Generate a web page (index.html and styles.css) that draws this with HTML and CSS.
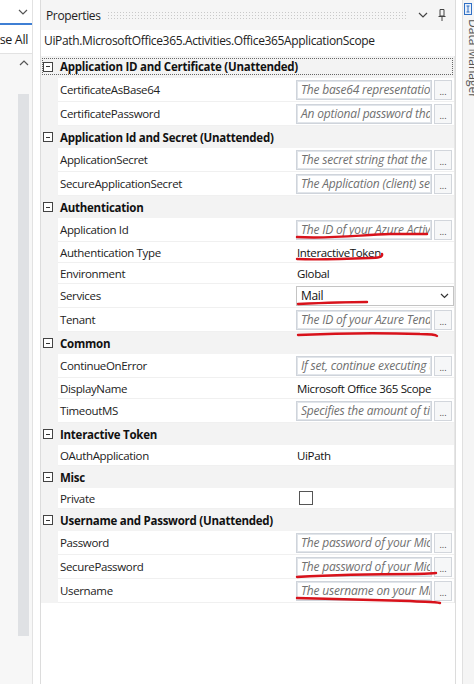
FILE: index.html
```html
<!DOCTYPE html>
<html lang="en">
<head>
    <meta charset="UTF-8">
    <meta name="viewport" content="width=device-width, initial-scale=1.0">
    <title>Properties</title>
    <link rel="stylesheet" href="styles.css">
</head>
<body>

    <!-- left tree panel, mostly scrolled off -->
    <div class="side">
        <div class="side-top">
            <svg class="chev" width="10" height="6" viewBox="0 0 10 6"><path d="M1 1 L5 5 L9 1" fill="none" stroke="#555" stroke-width="1.2"/></svg>
        </div>
        <div class="side-collapse">Collapse All</div>
        <div class="side-scroll">
            <svg class="chev-up" width="10" height="6" viewBox="0 0 10 6"><path d="M1 5 L5 1 L9 5" fill="none" stroke="#555" stroke-width="1.2"/></svg>
            <div class="thumb"></div>
        </div>
    </div>
    <div class="gutter"></div>

    <div class="props">
        <div class="props-head">
            <span class="props-title">Properties</span>
            <span class="grip"></span>
            <svg class="head-chev" width="10" height="6" viewBox="0 0 10 6"><path d="M1 1 L5 5 L9 1" fill="none" stroke="#444" stroke-width="1.2"/></svg>
            <svg class="pin" width="8" height="12" viewBox="0 0 8 12"><path d="M2 0.5 H6 V7 H2 Z M0.5 7.5 H7.5 M4 8 V12" fill="none" stroke="#444" stroke-width="1"/></svg>
        </div>
        <div class="props-type">UiPath.MicrosoftOffice365.Activities.Office365ApplicationScope</div>

        <div class="grid">
            <div class="cat focused"><span class="exp"></span>Application ID and Certificate (Unattended)</div>
            <div class="row tall">
                <div class="name">CertificateAsBase64</div>
                <div class="value"><span class="box"><span>The base64 representation of the certificate</span></span><span class="dots">...</span></div>
            </div>
            <div class="row tall">
                <div class="name">CertificatePassword</div>
                <div class="value"><span class="box"><span>An optional password that protects the certificate</span></span><span class="dots">...</span></div>
            </div>

            <div class="cat"><span class="exp"></span>Application Id and Secret (Unattended)</div>
            <div class="row tall">
                <div class="name">ApplicationSecret</div>
                <div class="value"><span class="box"><span>The secret string that the application uses</span></span><span class="dots">...</span></div>
            </div>
            <div class="row tall">
                <div class="name">SecureApplicationSecret</div>
                <div class="value"><span class="box"><span>The Application (client) secret</span></span><span class="dots">...</span></div>
            </div>

            <div class="cat"><span class="exp"></span>Authentication</div>
            <div class="row tall">
                <div class="name">Application Id</div>
                <div class="value"><span class="box"><span>The ID of your Azure Active Directory application</span></span><span class="dots">...</span></div>
            </div>
            <div class="row">
                <div class="name">Authentication Type</div>
                <div class="value plain">InteractiveToken</div>
            </div>
            <div class="row">
                <div class="name">Environment</div>
                <div class="value plain">Global</div>
            </div>
            <div class="row tall">
                <div class="name">Services</div>
                <div class="value"><span class="select">Mail<svg width="9" height="6" viewBox="0 0 9 6"><path d="M1 1 L4.5 4.5 L8 1" fill="none" stroke="#333" stroke-width="1.2"/></svg></span></div>
            </div>
            <div class="row tall">
                <div class="name">Tenant</div>
                <div class="value"><span class="box"><span>The ID of your Azure Tenant</span></span><span class="dots">...</span></div>
            </div>

            <div class="cat"><span class="exp"></span>Common</div>
            <div class="row tall">
                <div class="name">ContinueOnError</div>
                <div class="value"><span class="box"><span>If set, continue executing the remaining activities</span></span><span class="dots">...</span></div>
            </div>
            <div class="row">
                <div class="name">DisplayName</div>
                <div class="value plain">Microsoft Office 365 Scope</div>
            </div>
            <div class="row tall">
                <div class="name">TimeoutMS</div>
                <div class="value"><span class="box"><span>Specifies the amount of time to wait</span></span><span class="dots">...</span></div>
            </div>

            <div class="cat"><span class="exp"></span>Interactive Token</div>
            <div class="row">
                <div class="name">OAuthApplication</div>
                <div class="value plain">UiPath</div>
            </div>

            <div class="cat"><span class="exp"></span>Misc</div>
            <div class="row">
                <div class="name">Private</div>
                <div class="value plain"><span class="check"></span></div>
            </div>

            <div class="cat"><span class="exp"></span>Username and Password (Unattended)</div>
            <div class="row tall">
                <div class="name">Password</div>
                <div class="value"><span class="box"><span>The password of your Microsoft account</span></span><span class="dots">...</span></div>
            </div>
            <div class="row tall">
                <div class="name">SecurePassword</div>
                <div class="value"><span class="box"><span>The password of your Microsoft account</span></span><span class="dots">...</span></div>
            </div>
            <div class="row tall">
                <div class="name">Username</div>
                <div class="value"><span class="box"><span>The username on your Microsoft account</span></span><span class="dots">...</span></div>
            </div>
        </div>
    </div>

    <!-- collapsed Data Manager dock -->
    <div class="dock">
        <svg class="dock-icon" width="8" height="12" viewBox="0 0 8 12"><rect x="0.5" y="0.5" width="7" height="11" fill="#e8f0fb" stroke="#2f6fc4"/><path d="M2.5 3 H5.5 M4 3 V9 M2.5 9 H5.5" stroke="#2f6fc4" stroke-width="1"/></svg>
        <span class="dock-label">Data Manager</span>
    </div>

    <!-- red pen marks drawn over the screenshot -->
    <svg class="marks" width="474" height="684" viewBox="0 0 474 684">
        <g fill="none" stroke="#d8121b" stroke-width="2.4" stroke-linecap="round">
            <path d="M297 237 C330 239 360 235 390 234 C405 234 418 234 427 234"/>
            <path d="M297 259 C320 260 345 259 370 258 C378 258 383 257 382 254"/>
            <path d="M298 304 C320 303 345 302 367 302"/>
            <path d="M298 335 C340 333 390 333 420 334 C430 334 436 335 437 336"/>
            <path d="M297 577 C330 575 380 574 415 574 C428 574 434 573 436 573"/>
            <path d="M297 598 C330 599 370 600 410 601 C425 602 435 602 440 603"/>
        </g>
    </svg>

</body>
</html>
```

FILE: styles.css
```css
body {
    font-family: 'Open Sans', 'Noto Sans', sans-serif;
    font-size: 11.5px;
    letter-spacing: -0.35px;
    color: #1b1b1b;
    background-color: #fff;
    margin: 0;
    padding: 0;
    width: 474px;
    height: 684px;
    display: flex;
    overflow: hidden;
    position: relative;
}

/* left panel */
.side {
    width: 32px;
    background-color: #f7f7f7;
    border-right: 1px solid #e2e2e2;
    display: flex;
    flex-direction: column;
    overflow: hidden;
}

.side-top {
    height: 23px;
    background-color: #fff;
    border-bottom: 2px solid #3f7fd4;
    display: flex;
    align-items: center;
    justify-content: flex-end;
    padding-right: 4px;
}

.side-collapse {
    height: 28px;
    background-color: #fff;
    border-bottom: 1px solid #e2e2e2;
    white-space: nowrap;
    direction: rtl;
    text-align: left;
    line-height: 30px;
    font-size: 12.5px;
    padding-right: 4px;
    overflow: hidden;
}

.side-scroll {
    flex: 1;
    display: flex;
    flex-direction: column;
    align-items: flex-end;
    padding: 6px 3px 0 0;
}

.chev-up {
    margin-bottom: 28px;
}

.thumb {
    width: 11px;
    height: 542px;
    background-color: #dfe1e4;
}

.gutter {
    width: 7px;
    background-color: #fff;
}

/* properties panel */
.props {
    width: 414px;
    border-left: 1px solid #dcdcdc;
    border-right: 1px solid #dcdcdc;
    display: flex;
    flex-direction: column;
}

.props-head {
    height: 30px;
    background-color: #f5f5f5;
    display: flex;
    align-items: center;
    padding: 0 9px 0 5px;
}

.props-title {
    font-size: 12px;
    color: #222;
}

.grip {
    flex: 1;
    height: 8px;
    margin: 0 10px 0 6px;
    background-image: radial-gradient(#c9c9c9 0.7px, transparent 0.9px);
    background-size: 3px 3px;
}

.pin {
    margin-left: 10px;
}

.props-type {
    height: 26px;
    line-height: 22px;
    padding-left: 3px;
    font-size: 12px;
    color: #222;
    white-space: nowrap;
}

/* grey margin to the left of each row */
.grid {
    display: flex;
    flex-direction: column;
    border-right: 1px solid #e6e6e6;
    background-color: #f3f3f3;
}

.cat {
    height: 22px;
    background-color: #f3f3f3;
    display: flex;
    align-items: center;
    font-weight: bold;
    font-size: 11.5px;
    letter-spacing: -0.25px;
    color: #111;
}

.cat.focused {
    outline: 1px dotted #666;
    outline-offset: -2px;
    height: 19px;
    margin-top: 1px;
    margin-bottom: 2px;
}

.exp {
    width: 8px;
    height: 8px;
    border: 1px solid #444;
    margin: 0 7px 0 2px;
    position: relative;
    background-color: #fff;
}

.exp::after {
    content: "";
    position: absolute;
    left: 2px;
    top: 3.5px;
    width: 4px;
    height: 1px;
    background-color: #333;
}

.row {
    height: 21px;
    display: grid;
    grid-template-columns: 235px 1fr;
    margin-left: 17px;
    background-color: #fff;
    border-bottom: 1px solid #f0f0f0;
    box-sizing: border-box;
}

.row.tall {
    height: 24px;
}

.name {
    padding-left: 2px;
    display: flex;
    align-items: center;
    white-space: nowrap;
    color: #222;
}

.value {
    display: flex;
    align-items: center;
    padding-left: 3px;
    gap: 2px;
    overflow: hidden;
    white-space: nowrap;
}

.value.plain {
    padding-left: 4px;
    color: #111;
}

.box {
    width: 126px;
    height: 16px;
    border: 2px solid #e1e5ea;
    outline: 1px solid #cfd4db;
    outline-offset: -1px;
    padding: 0 3px;
    line-height: 16px;
    font-size: 12px;
    letter-spacing: -0.2px;
    font-style: italic;
    color: #707070;
    overflow: hidden;
    white-space: nowrap;
}

.dots {
    width: 16px;
    height: 18px;
    border: 1px solid #d2d6dc;
    background-color: #f6f7f8;
    font-size: 9px;
    letter-spacing: 0;
    color: #444;
    text-align: center;
    line-height: 22px;
    overflow: hidden;
}

.select {
    width: 149px;
    height: 18px;
    border: 1px solid #c4c4c4;
    display: flex;
    align-items: center;
    justify-content: space-between;
    padding: 0 4px;
    font-size: 12px;
    color: #111;
}

.check {
    width: 12px;
    height: 12px;
    border: 1px solid #555;
    margin-left: 2px;
}

/* right dock */
.dock {
    flex: 1;
    background-color: #f5f5f5;
    border-left: 1px solid #e0e0e0;
    margin-left: 6px;
    display: flex;
    flex-direction: column;
    align-items: flex-start;
    padding: 3px 0 0 1px;
    overflow: hidden;
}

.dock-label {
    writing-mode: vertical-rl;
    margin: 4px 0 0 1px;
    font-size: 12px;
    letter-spacing: 0;
    color: #555;
    white-space: nowrap;
}

.marks {
    position: absolute;
    left: 0;
    top: 0;
    pointer-events: none;
}
```
